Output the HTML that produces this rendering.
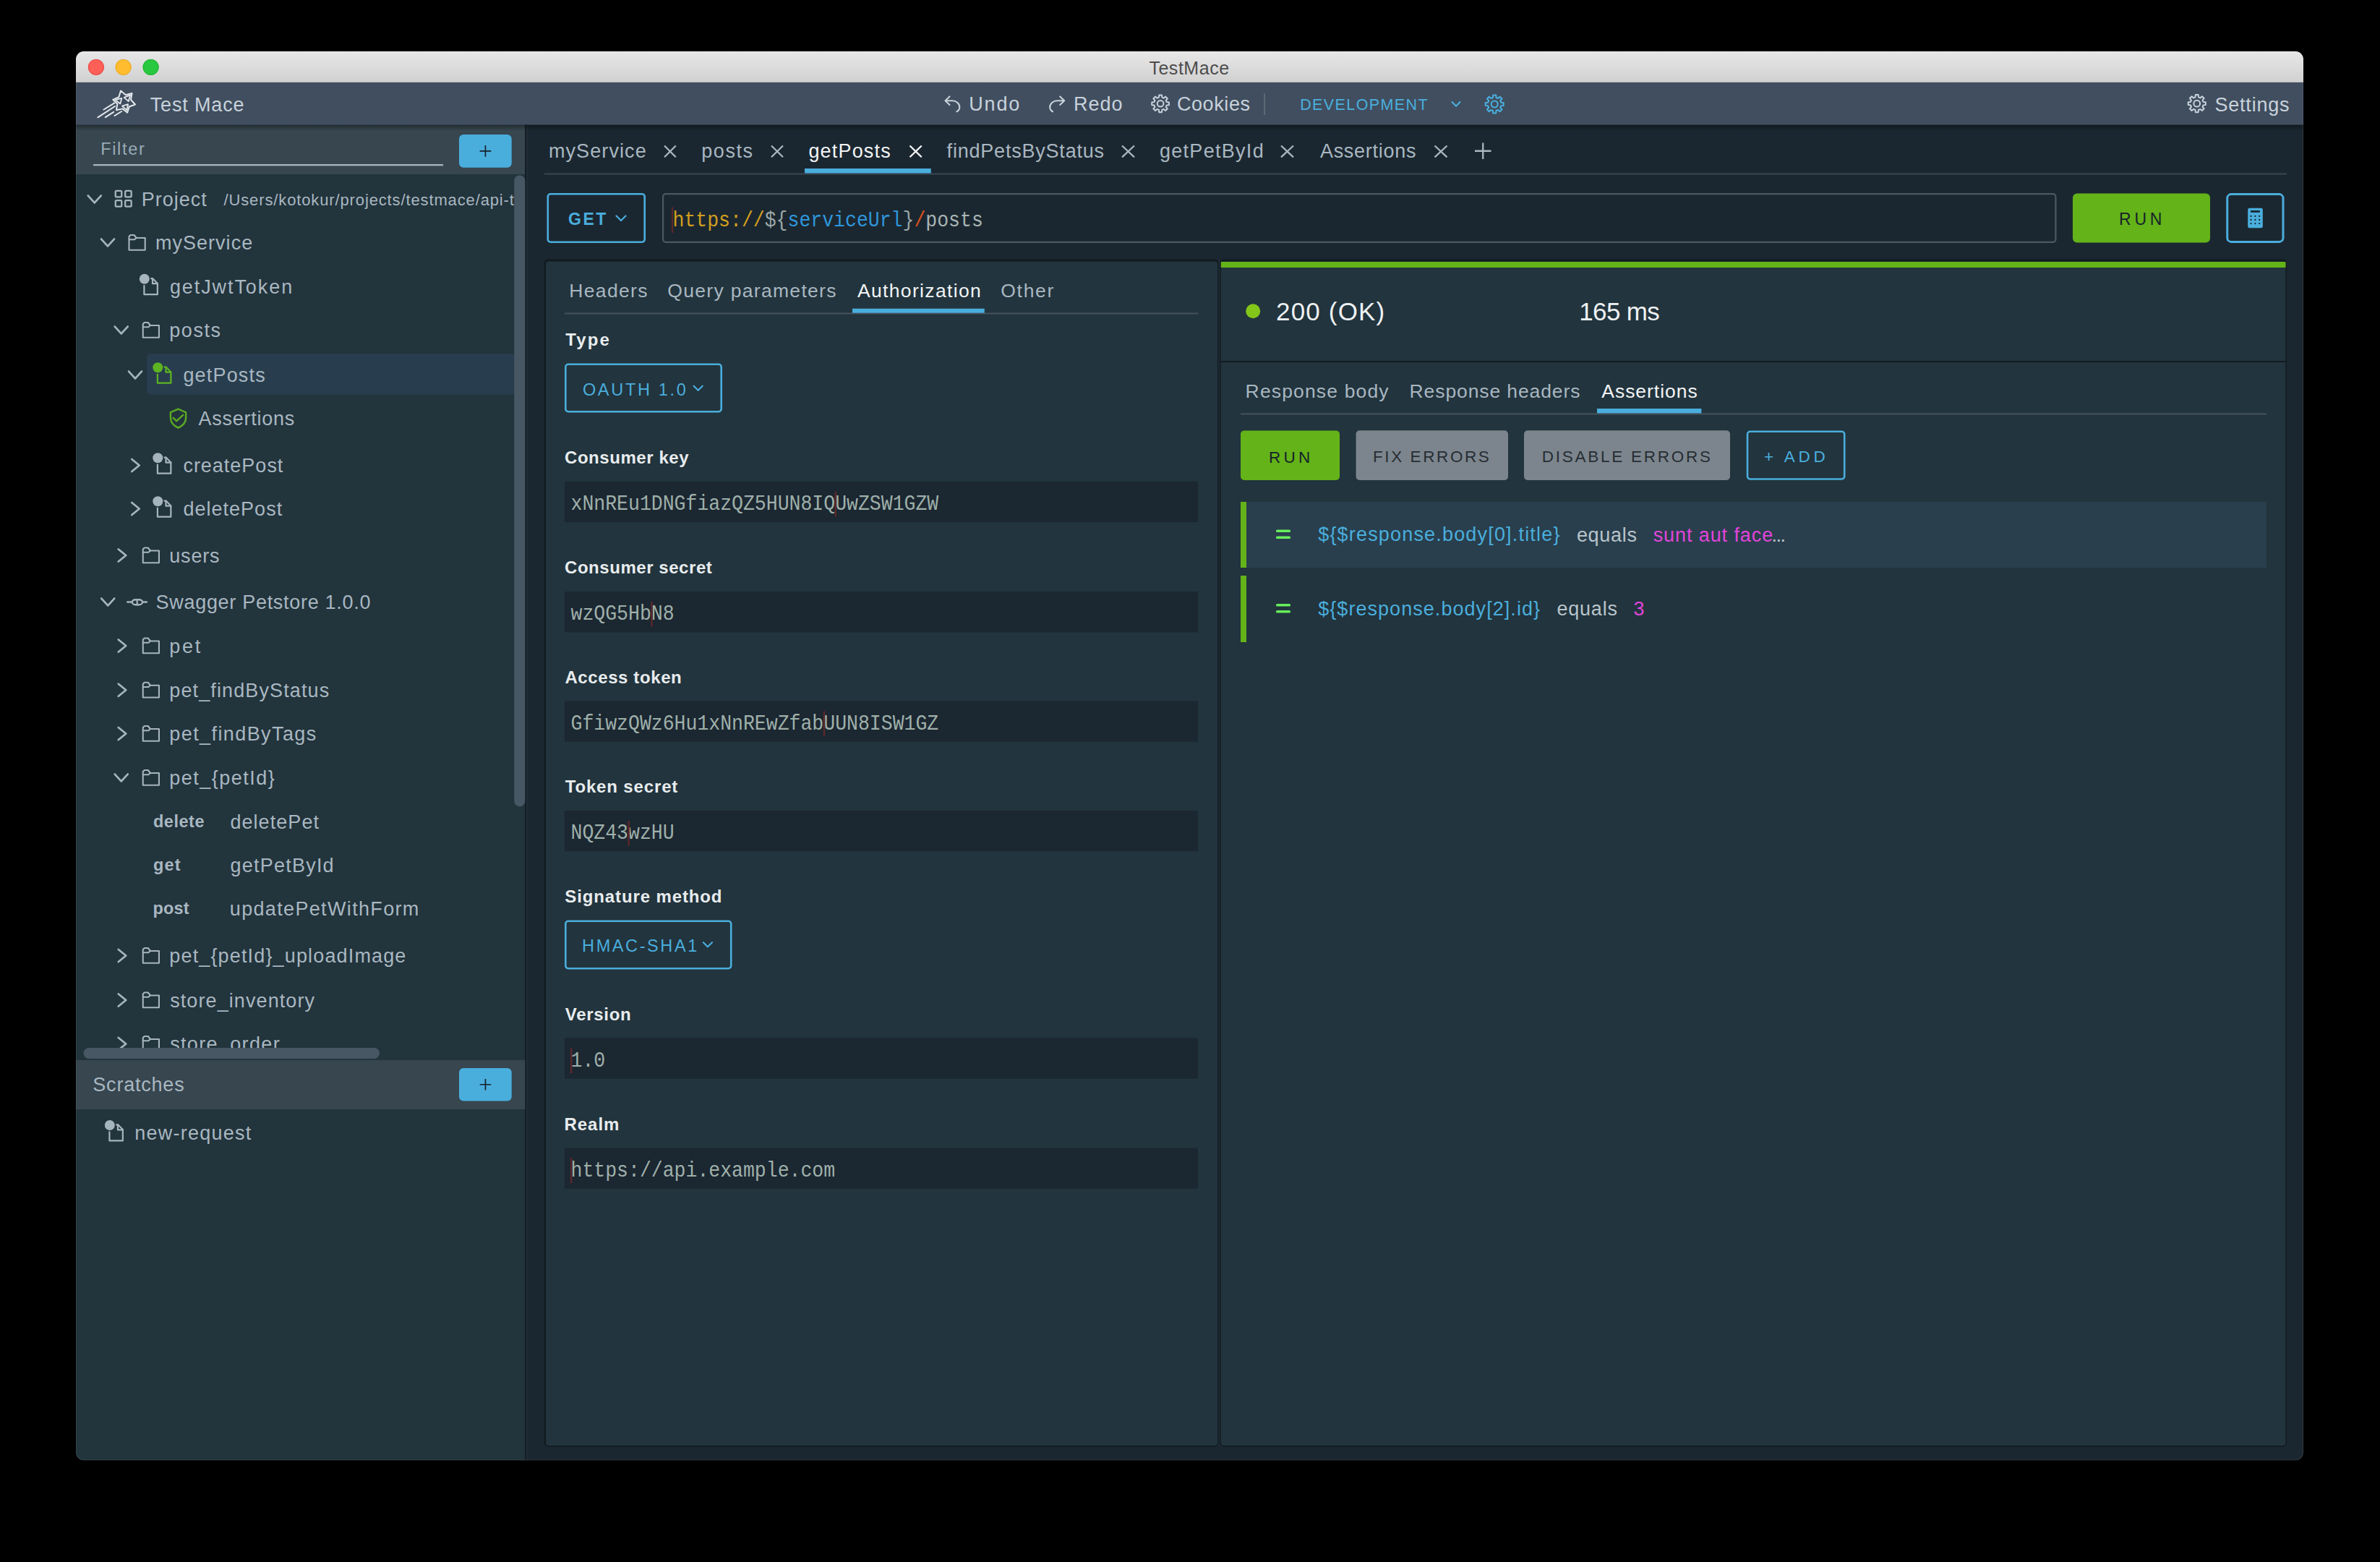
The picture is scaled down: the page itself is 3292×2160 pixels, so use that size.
<!DOCTYPE html>
<html><head><meta charset="utf-8"><title>TestMace</title>
<style>html,body{margin:0;padding:0;background:#000;overflow:hidden}svg{display:block}</style>
</head><body>
<svg width="3292" height="2160" viewBox="0 0 3292 2160">
<defs>
<clipPath id="win"><rect x="105" y="71" width="3081" height="1948.5" rx="11"/></clipPath>
<linearGradient id="tb" x1="0" y1="0" x2="0" y2="1"><stop offset="0" stop-color="#e7e7e7"/><stop offset="1" stop-color="#d1d1d1"/></linearGradient>
<linearGradient id="hsh" x1="0" y1="0" x2="0" y2="1"><stop offset="0" stop-color="#000" stop-opacity="0.35"/><stop offset="1" stop-color="#000" stop-opacity="0"/></linearGradient>
<clipPath id="tree"><rect x="105" y="241" width="606" height="1208"/></clipPath>
<clipPath id="treepath"><rect x="105" y="241" width="606" height="1208"/></clipPath>
</defs>
<rect x="0" y="0" width="3292" height="2160" fill="#000"/>
<g clip-path="url(#win)">
<rect x="105" y="71" width="3081" height="43" fill="url(#tb)"/>
<rect x="105" y="113" width="3081" height="1" fill="#bcbcbc"/>
<circle cx="132.9" cy="92.9" r="11" fill="#fe5f57"/>
<circle cx="170.6" cy="92.9" r="11" fill="#febc2e"/>
<circle cx="208.6" cy="92.9" r="11" fill="#28c840"/>
<circle cx="132.9" cy="92.9" r="10.6" fill="none" stroke="#e0443e" stroke-width="0.8"/>
<circle cx="170.6" cy="92.9" r="10.6" fill="none" stroke="#dea123" stroke-width="0.8"/>
<circle cx="208.6" cy="92.9" r="10.6" fill="none" stroke="#1aab29" stroke-width="0.8"/>
<text x="1589.4" y="103" font-family="'Liberation Sans', sans-serif" font-size="25" fill="#4d4d4d" letter-spacing="0.53">TestMace</text>
<rect x="105" y="114" width="3081" height="59" fill="#404e5f"/>
<rect x="105" y="172.5" width="621.3" height="1847" fill="#22343c"/>
<rect x="105" y="173" width="621.3" height="68" fill="#37464f"/>
<rect x="726.3" y="172.5" width="2459.7" height="1847" fill="#1b2730"/>
<rect x="726.3" y="172.5" width="1.7" height="1847" fill="#151e25"/>
<rect x="728" y="172.5" width="2" height="1847" fill="#1f2d35"/>
<rect x="105" y="173" width="3081" height="8" fill="url(#hsh)"/>
<path d="M167.00,125.60 L173.82,131.26 L182.50,129.00 L181.02,137.96 L187.00,144.50 L178.78,147.54 L176.20,155.80 L169.43,150.36 L161.00,152.20 L162.33,143.83 L156.20,137.80 L164.37,134.26 Z" fill="none" stroke="#e4e8ec" stroke-width="2" stroke-linecap="round" stroke-linejoin="round"/>
<path d="M171.70,134.80 L180.10,131.40 L177.80,140.20 Z" fill="none" stroke="#e4e8ec" stroke-width="1.8" stroke-linecap="round" stroke-linejoin="round"/>
<path d="M159.60,138.20 L168.40,135.80 L166.30,143.50 Z" fill="none" stroke="#e4e8ec" stroke-width="1.8" stroke-linecap="round" stroke-linejoin="round"/>
<path d="M169.00,146.60 L177.10,144.20 L175.40,152.30 Z" fill="none" stroke="#e4e8ec" stroke-width="1.8" stroke-linecap="round" stroke-linejoin="round"/>
<path d="M143.5,151.5 L158,142.6" fill="none" stroke="#e4e8ec" stroke-width="2" stroke-linecap="round" stroke-linejoin="round"/>
<path d="M135.3,162.3 L159,147" fill="none" stroke="#e4e8ec" stroke-width="2" stroke-linecap="round" stroke-linejoin="round"/>
<path d="M145.8,162.2 L157.2,154.8" fill="none" stroke="#e4e8ec" stroke-width="2" stroke-linecap="round" stroke-linejoin="round"/>
<path d="M158.5,160 L168.2,154" fill="none" stroke="#e4e8ec" stroke-width="2" stroke-linecap="round" stroke-linejoin="round"/>
<text x="207.7" y="154" font-family="'Liberation Sans', sans-serif" font-size="27" fill="#c8d2db" letter-spacing="0.86">Test Mace</text>
<path d="M1313.5,133.5 L1307.5,139.3 L1313.5,145 M1307.5,139.3 H1317 C1323,139.3 1327.3,143.5 1327.3,148.3 C1327.3,151 1326,153 1323.5,154.3" fill="none" stroke="#c8d2db" stroke-width="2.1" stroke-linecap="round" stroke-linejoin="round"/>
<text x="1340.2" y="152.5" font-family="'Liberation Sans', sans-serif" font-size="27" fill="#c8d2db" letter-spacing="1.87">Undo</text>
<path d="M1466.2,133.5 L1472.2,139.3 L1466.2,145 M1472.2,139.3 H1462.5 C1456.5,139.3 1452.2,143.5 1452.2,148.3 C1452.2,151 1453.5,153 1456,154.3" fill="none" stroke="#c8d2db" stroke-width="2.1" stroke-linecap="round" stroke-linejoin="round"/>
<text x="1485" y="152.5" font-family="'Liberation Sans', sans-serif" font-size="27" fill="#c8d2db" letter-spacing="1.03">Redo</text>
<path d="M1603.22,131.45 L1606.98,131.45 L1607.31,134.70 L1609.62,135.66 L1612.15,133.59 L1614.81,136.25 L1612.74,138.78 L1613.70,141.09 L1616.95,141.42 L1616.95,145.18 L1613.70,145.51 L1612.74,147.82 L1614.81,150.35 L1612.15,153.01 L1609.62,150.94 L1607.31,151.90 L1606.98,155.15 L1603.22,155.15 L1602.89,151.90 L1600.58,150.94 L1598.05,153.01 L1595.39,150.35 L1597.46,147.82 L1596.50,145.51 L1593.25,145.18 L1593.25,141.42 L1596.50,141.09 L1597.46,138.78 L1595.39,136.25 L1598.05,133.59 L1600.58,135.66 L1602.89,134.70 Z" fill="none" stroke="#c8d2db" stroke-width="2" stroke-linecap="round" stroke-linejoin="round"/>
<circle cx="1605.1" cy="143.3" r="4.32" fill="none" stroke="#c8d2db" stroke-width="2"/>
<text x="1627.9" y="152.5" font-family="'Liberation Sans', sans-serif" font-size="27" fill="#c8d2db" letter-spacing="0.6">Cookies</text>
<rect x="1748" y="129" width="2" height="30" fill="#5b6773"/>
<text x="1798.2" y="152" font-family="'Liberation Sans', sans-serif" font-size="21.5" fill="#4aaedd" letter-spacing="1.39">DEVELOPMENT</text>
<path d="M2008.5,141 L2014,146.8 L2019.5,141" fill="none" stroke="#4aaedd" stroke-width="2.1" stroke-linecap="round" stroke-linejoin="round"/>
<path d="M2065.23,131.56 L2069.17,131.56 L2069.52,134.97 L2071.95,135.97 L2074.61,133.81 L2077.39,136.59 L2075.23,139.25 L2076.23,141.68 L2079.64,142.03 L2079.64,145.97 L2076.23,146.32 L2075.23,148.75 L2077.39,151.41 L2074.61,154.19 L2071.95,152.03 L2069.52,153.03 L2069.17,156.44 L2065.23,156.44 L2064.88,153.03 L2062.45,152.03 L2059.79,154.19 L2057.01,151.41 L2059.17,148.75 L2058.17,146.32 L2054.76,145.97 L2054.76,142.03 L2058.17,141.68 L2059.17,139.25 L2057.01,136.59 L2059.79,133.81 L2062.45,135.97 L2064.88,134.97 Z" fill="none" stroke="#4aaedd" stroke-width="2.1" stroke-linecap="round" stroke-linejoin="round"/>
<circle cx="2067.2" cy="144" r="4.54" fill="none" stroke="#4aaedd" stroke-width="2.1"/>
<path d="M3036.84,131.10 L3040.66,131.10 L3041.00,134.41 L3043.35,135.38 L3045.92,133.28 L3048.62,135.98 L3046.52,138.55 L3047.49,140.90 L3050.80,141.24 L3050.80,145.06 L3047.49,145.40 L3046.52,147.75 L3048.62,150.32 L3045.92,153.02 L3043.35,150.92 L3041.00,151.89 L3040.66,155.20 L3036.84,155.20 L3036.50,151.89 L3034.15,150.92 L3031.58,153.02 L3028.88,150.32 L3030.98,147.75 L3030.01,145.40 L3026.70,145.06 L3026.70,141.24 L3030.01,140.90 L3030.98,138.55 L3028.88,135.98 L3031.58,133.28 L3034.15,135.38 L3036.50,134.41 Z" fill="none" stroke="#c8d2db" stroke-width="2" stroke-linecap="round" stroke-linejoin="round"/>
<circle cx="3038.75" cy="143.15" r="4.39" fill="none" stroke="#c8d2db" stroke-width="2"/>
<text x="3063.4" y="154" font-family="'Liberation Sans', sans-serif" font-size="27" fill="#c8d2db" letter-spacing="0.81">Settings</text>
<text x="139.2" y="214.3" font-family="'Liberation Sans', sans-serif" font-size="23.5" fill="#9aabb6" letter-spacing="1.66">Filter</text>
<rect x="129" y="227" width="484" height="2.3" fill="#a9b6bf"/>
<rect x="635" y="186" width="72.7" height="45.8" rx="6" fill="#4aaedd"/>
<path d="M663.6,208.9 H679.3 M671.45,201 V216.8" fill="none" stroke="#15202a" stroke-width="1.7" stroke-linecap="butt" stroke-linejoin="round"/>
<rect x="203" y="489.25" width="509" height="56.25" rx="5" fill="#283e4e"/>
<g clip-path="url(#tree)">
<path d="M121.8,270.6 L130.75,280.4 L139.7,270.6" fill="none" stroke="#a6b4be" stroke-width="2.8" stroke-linecap="round" stroke-linejoin="round"/>
<rect x="159.75" y="263.85" width="8.5" height="8.5" rx="1.35" fill="none" stroke="#a6b4be" stroke-width="2.3"/>
<rect x="159.75" y="277.15" width="8.5" height="8.5" rx="1.35" fill="none" stroke="#a6b4be" stroke-width="2.3"/>
<rect x="173.15" y="263.85" width="8.5" height="8.5" rx="1.35" fill="none" stroke="#a6b4be" stroke-width="2.3"/>
<rect x="173.15" y="277.15" width="8.5" height="8.5" rx="1.35" fill="none" stroke="#a6b4be" stroke-width="2.3"/>
<text x="195.8" y="285" font-family="'Liberation Sans', sans-serif" font-size="27" fill="#a9b7c1" letter-spacing="0.98">Project</text>
<text x="309.5" y="284" font-family="'Liberation Sans', sans-serif" font-size="22" fill="#a9b7c1" letter-spacing="0.87">/Users/kotokur/projects/testmace/api-tests</text>
<path d="M140.05,330.6 L149,340.4 L157.95,330.6" fill="none" stroke="#a6b4be" stroke-width="2.8" stroke-linecap="round" stroke-linejoin="round"/>
<path d="M178.5,327 V345.8 H200.7 V329 H188.7 L185.5,325 H180.5 Z" fill="none" stroke="#a6b4be" stroke-width="2.1" stroke-linecap="round" stroke-linejoin="round"/>
<path d="M178.5,331.2 H186.1 L188.7,329" fill="none" stroke="#a6b4be" stroke-width="2.1" stroke-linecap="round" stroke-linejoin="round"/>
<text x="214.95" y="345" font-family="'Liberation Sans', sans-serif" font-size="27" fill="#a9b7c1" letter-spacing="1.03">myService</text>
<path d="M199.4,392.5 V407.2 H217.85 V391.9 L211.1,385.1 H206" fill="none" stroke="#a6b4be" stroke-width="2.2" stroke-linecap="round" stroke-linejoin="round"/>
<path d="M211,385.1 V392.2 H217.85" fill="none" stroke="#a6b4be" stroke-width="2.2" stroke-linecap="round" stroke-linejoin="round"/>
<circle cx="199.8" cy="385.75" r="8.6" fill="#22343c"/>
<circle cx="199.8" cy="385.75" r="7" fill="#a6b4be"/>
<text x="234.9" y="405.5" font-family="'Liberation Sans', sans-serif" font-size="27" fill="#a9b7c1" letter-spacing="1.92">getJwtToken</text>
<path d="M158.8,451.6 L167.75,461.4 L176.7,451.6" fill="none" stroke="#a6b4be" stroke-width="2.8" stroke-linecap="round" stroke-linejoin="round"/>
<path d="M197.75,448 V466.8 H219.95 V450 H207.95 L204.75,446 H199.75 Z" fill="none" stroke="#a6b4be" stroke-width="2.1" stroke-linecap="round" stroke-linejoin="round"/>
<path d="M197.75,452.2 H205.35 L207.95,450" fill="none" stroke="#a6b4be" stroke-width="2.1" stroke-linecap="round" stroke-linejoin="round"/>
<text x="234.3" y="466" font-family="'Liberation Sans', sans-serif" font-size="27" fill="#a9b7c1" letter-spacing="1.55">posts</text>
<path d="M178.05,513.6 L187,523.4 L195.95,513.6" fill="none" stroke="#a6b4be" stroke-width="2.8" stroke-linecap="round" stroke-linejoin="round"/>
<path d="M217.9,515 V529.7 H236.35 V514.4 L229.6,507.6 H224.5" fill="none" stroke="#5db322" stroke-width="2.2" stroke-linecap="round" stroke-linejoin="round"/>
<path d="M229.5,507.6 V514.7 H236.35" fill="none" stroke="#5db322" stroke-width="2.2" stroke-linecap="round" stroke-linejoin="round"/>
<circle cx="218.3" cy="508.25" r="8.6" fill="#283e4e"/>
<circle cx="218.3" cy="508.25" r="7" fill="#5db322"/>
<text x="253.4" y="528" font-family="'Liberation Sans', sans-serif" font-size="27" fill="#a9b7c1" letter-spacing="1.18">getPosts</text>
<path d="M246.5,565.7 L235.9,570.2 V577.5 Q235.9,587 246.5,591.5 Q257.1,587 257.1,577.5 V570.2 Z" fill="none" stroke="#5aa823" stroke-width="2.5" stroke-linecap="round" stroke-linejoin="round"/>
<path d="M239.6,577.9 L244.4,582.2 L253.2,573.9" fill="none" stroke="#5aa823" stroke-width="2.5" stroke-linecap="round" stroke-linejoin="round"/>
<text x="274.4" y="587.5" font-family="'Liberation Sans', sans-serif" font-size="27" fill="#a9b7c1" letter-spacing="0.76">Assertions</text>
<path d="M182.3,635 L192.7,643.5 L182.3,652" fill="none" stroke="#a6b4be" stroke-width="2.8" stroke-linecap="round" stroke-linejoin="round"/>
<path d="M217.9,640 V654.7 H236.35 V639.4 L229.6,632.6 H224.5" fill="none" stroke="#a6b4be" stroke-width="2.2" stroke-linecap="round" stroke-linejoin="round"/>
<path d="M229.5,632.6 V639.7 H236.35" fill="none" stroke="#a6b4be" stroke-width="2.2" stroke-linecap="round" stroke-linejoin="round"/>
<circle cx="218.3" cy="633.25" r="8.6" fill="#22343c"/>
<circle cx="218.3" cy="633.25" r="7" fill="#a6b4be"/>
<text x="253.4" y="653" font-family="'Liberation Sans', sans-serif" font-size="27" fill="#a9b7c1" letter-spacing="0.99">createPost</text>
<path d="M182.3,695 L192.7,703.5 L182.3,712" fill="none" stroke="#a6b4be" stroke-width="2.8" stroke-linecap="round" stroke-linejoin="round"/>
<path d="M217.9,700 V714.7 H236.35 V699.4 L229.6,692.6 H224.5" fill="none" stroke="#a6b4be" stroke-width="2.2" stroke-linecap="round" stroke-linejoin="round"/>
<path d="M229.5,692.6 V699.7 H236.35" fill="none" stroke="#a6b4be" stroke-width="2.2" stroke-linecap="round" stroke-linejoin="round"/>
<circle cx="218.3" cy="693.25" r="8.6" fill="#22343c"/>
<circle cx="218.3" cy="693.25" r="7" fill="#a6b4be"/>
<text x="253.4" y="713" font-family="'Liberation Sans', sans-serif" font-size="27" fill="#a9b7c1" letter-spacing="1.02">deletePost</text>
<path d="M163.8,759.5 L174.2,768 L163.8,776.5" fill="none" stroke="#a6b4be" stroke-width="2.8" stroke-linecap="round" stroke-linejoin="round"/>
<path d="M197.75,759.5 V778.3 H219.95 V761.5 H207.95 L204.75,757.5 H199.75 Z" fill="none" stroke="#a6b4be" stroke-width="2.1" stroke-linecap="round" stroke-linejoin="round"/>
<path d="M197.75,763.7 H205.35 L207.95,761.5" fill="none" stroke="#a6b4be" stroke-width="2.1" stroke-linecap="round" stroke-linejoin="round"/>
<text x="234.3" y="777.5" font-family="'Liberation Sans', sans-serif" font-size="27" fill="#a9b7c1" letter-spacing="0.8">users</text>
<path d="M140.3,827.6 L149.25,837.4 L158.2,827.6" fill="none" stroke="#a6b4be" stroke-width="2.8" stroke-linecap="round" stroke-linejoin="round"/>
<path d="M176.25,832.5 H181.6 M198.2,832.5 H202.85" fill="none" stroke="#a6b4be" stroke-width="2.5" stroke-linecap="round" stroke-linejoin="round"/>
<rect x="182.8" y="829.2" width="14.2" height="7" rx="4.5" fill="none" stroke="#a6b4be" stroke-width="2.4"/>
<path d="M189.7,829 V836.4" fill="none" stroke="#a6b4be" stroke-width="2.2" stroke-linecap="round" stroke-linejoin="round"/>
<text x="215.55" y="842" font-family="'Liberation Sans', sans-serif" font-size="27" fill="#a9b7c1" letter-spacing="0.7">Swagger Petstore 1.0.0</text>
<path d="M163.8,884.5 L174.2,893 L163.8,901.5" fill="none" stroke="#a6b4be" stroke-width="2.8" stroke-linecap="round" stroke-linejoin="round"/>
<path d="M197.75,884.5 V903.3 H219.95 V886.5 H207.95 L204.75,882.5 H199.75 Z" fill="none" stroke="#a6b4be" stroke-width="2.1" stroke-linecap="round" stroke-linejoin="round"/>
<path d="M197.75,888.7 H205.35 L207.95,886.5" fill="none" stroke="#a6b4be" stroke-width="2.1" stroke-linecap="round" stroke-linejoin="round"/>
<text x="234.3" y="902.5" font-family="'Liberation Sans', sans-serif" font-size="27" fill="#a9b7c1" letter-spacing="2.7">pet</text>
<path d="M163.8,945.75 L174.2,954.25 L163.8,962.75" fill="none" stroke="#a6b4be" stroke-width="2.8" stroke-linecap="round" stroke-linejoin="round"/>
<path d="M197.75,945.75 V964.55 H219.95 V947.75 H207.95 L204.75,943.75 H199.75 Z" fill="none" stroke="#a6b4be" stroke-width="2.1" stroke-linecap="round" stroke-linejoin="round"/>
<path d="M197.75,949.95 H205.35 L207.95,947.75" fill="none" stroke="#a6b4be" stroke-width="2.1" stroke-linecap="round" stroke-linejoin="round"/>
<text x="234.3" y="963.75" font-family="'Liberation Sans', sans-serif" font-size="27" fill="#a9b7c1" letter-spacing="1.12">pet_findByStatus</text>
<path d="M163.8,1006 L174.2,1014.5 L163.8,1023" fill="none" stroke="#a6b4be" stroke-width="2.8" stroke-linecap="round" stroke-linejoin="round"/>
<path d="M197.75,1006 V1024.8 H219.95 V1008 H207.95 L204.75,1004 H199.75 Z" fill="none" stroke="#a6b4be" stroke-width="2.1" stroke-linecap="round" stroke-linejoin="round"/>
<path d="M197.75,1010.2 H205.35 L207.95,1008" fill="none" stroke="#a6b4be" stroke-width="2.1" stroke-linecap="round" stroke-linejoin="round"/>
<text x="234.3" y="1024" font-family="'Liberation Sans', sans-serif" font-size="27" fill="#a9b7c1" letter-spacing="1.41">pet_findByTags</text>
<path d="M158.8,1070.6 L167.75,1080.4 L176.7,1070.6" fill="none" stroke="#a6b4be" stroke-width="2.8" stroke-linecap="round" stroke-linejoin="round"/>
<path d="M197.75,1067 V1085.8 H219.95 V1069 H207.95 L204.75,1065 H199.75 Z" fill="none" stroke="#a6b4be" stroke-width="2.1" stroke-linecap="round" stroke-linejoin="round"/>
<path d="M197.75,1071.2 H205.35 L207.95,1069" fill="none" stroke="#a6b4be" stroke-width="2.1" stroke-linecap="round" stroke-linejoin="round"/>
<text x="234.3" y="1085" font-family="'Liberation Sans', sans-serif" font-size="27" fill="#a9b7c1" letter-spacing="1.48">pet_{petId}</text>
<path d="M163.8,1313 L174.2,1321.5 L163.8,1330" fill="none" stroke="#a6b4be" stroke-width="2.8" stroke-linecap="round" stroke-linejoin="round"/>
<path d="M197.75,1313 V1331.8 H219.95 V1315 H207.95 L204.75,1311 H199.75 Z" fill="none" stroke="#a6b4be" stroke-width="2.1" stroke-linecap="round" stroke-linejoin="round"/>
<path d="M197.75,1317.2 H205.35 L207.95,1315" fill="none" stroke="#a6b4be" stroke-width="2.1" stroke-linecap="round" stroke-linejoin="round"/>
<text x="234.3" y="1331" font-family="'Liberation Sans', sans-serif" font-size="27" fill="#a9b7c1" letter-spacing="1.15">pet_{petId}_uploadImage</text>
<path d="M163.8,1374.5 L174.2,1383 L163.8,1391.5" fill="none" stroke="#a6b4be" stroke-width="2.8" stroke-linecap="round" stroke-linejoin="round"/>
<path d="M197.75,1374.5 V1393.3 H219.95 V1376.5 H207.95 L204.75,1372.5 H199.75 Z" fill="none" stroke="#a6b4be" stroke-width="2.1" stroke-linecap="round" stroke-linejoin="round"/>
<path d="M197.75,1378.7 H205.35 L207.95,1376.5" fill="none" stroke="#a6b4be" stroke-width="2.1" stroke-linecap="round" stroke-linejoin="round"/>
<text x="235.2" y="1392.5" font-family="'Liberation Sans', sans-serif" font-size="27" fill="#a9b7c1" letter-spacing="1.09">store_inventory</text>
<path d="M163.8,1435 L174.2,1443.5 L163.8,1452" fill="none" stroke="#a6b4be" stroke-width="2.8" stroke-linecap="round" stroke-linejoin="round"/>
<path d="M197.75,1435 V1453.8 H219.95 V1437 H207.95 L204.75,1433 H199.75 Z" fill="none" stroke="#a6b4be" stroke-width="2.1" stroke-linecap="round" stroke-linejoin="round"/>
<path d="M197.75,1439.2 H205.35 L207.95,1437" fill="none" stroke="#a6b4be" stroke-width="2.1" stroke-linecap="round" stroke-linejoin="round"/>
<text x="235.2" y="1453" font-family="'Liberation Sans', sans-serif" font-size="27" fill="#a9b7c1" letter-spacing="1.34">store_order</text>
<text x="212" y="1143.7" font-family="'Liberation Sans', sans-serif" font-size="23.5" fill="#a9b7c1" font-weight="700" letter-spacing="0.52">delete</text>
<text x="318.4" y="1145.5" font-family="'Liberation Sans', sans-serif" font-size="27" fill="#a9b7c1" letter-spacing="1.06">deletePet</text>
<text x="212" y="1204.2" font-family="'Liberation Sans', sans-serif" font-size="23.5" fill="#a9b7c1" font-weight="700" letter-spacing="1.18">get</text>
<text x="318.4" y="1206" font-family="'Liberation Sans', sans-serif" font-size="27" fill="#a9b7c1" letter-spacing="1.24">getPetById</text>
<text x="211.5" y="1264.2" font-family="'Liberation Sans', sans-serif" font-size="23.5" fill="#a9b7c1" font-weight="700" letter-spacing="0.15">post</text>
<text x="317.8" y="1266" font-family="'Liberation Sans', sans-serif" font-size="27" fill="#a9b7c1" letter-spacing="1.34">updatePetWithForm</text>
</g>
<rect x="711.2" y="242.4" width="15.1" height="872.8" rx="7.5" fill="#485764"/>
<rect x="115.5" y="1449" width="409.5" height="15" rx="7.5" fill="#485764"/>
<rect x="105" y="1466" width="621.3" height="68" fill="#37464f"/>
<text x="128.3" y="1508.75" font-family="'Liberation Sans', sans-serif" font-size="27" fill="#a9b7c1" letter-spacing="0.79">Scratches</text>
<rect x="635" y="1477" width="72.7" height="45.5" rx="6" fill="#4aaedd"/>
<path d="M663.6,1499.75 H679.3 M671.45,1491.9 V1507.6" fill="none" stroke="#15202a" stroke-width="1.7" stroke-linecap="butt" stroke-linejoin="round"/>
<path d="M151.4,1562.7 V1577.4 H169.85 V1562.1 L163.1,1555.3 H158" fill="none" stroke="#a6b4be" stroke-width="2.2" stroke-linecap="round" stroke-linejoin="round"/>
<path d="M163,1555.3 V1562.4 H169.85" fill="none" stroke="#a6b4be" stroke-width="2.2" stroke-linecap="round" stroke-linejoin="round"/>
<circle cx="151.8" cy="1555.95" r="8.6" fill="#22343c"/>
<circle cx="151.8" cy="1555.95" r="7" fill="#a6b4be"/>
<text x="186.2" y="1575.7" font-family="'Liberation Sans', sans-serif" font-size="27" fill="#a9b7c1" letter-spacing="1.24">new-request</text>
<text x="758.95" y="218.3" font-family="'Liberation Sans', sans-serif" font-size="27" fill="#a9b7c1" letter-spacing="1.09">myService</text>
<path d="M919,201.5 L934.75,217.3 M934.75,201.5 L919,217.3" fill="none" stroke="#a9b7c1" stroke-width="2.3" stroke-linecap="butt" stroke-linejoin="round"/>
<text x="970.3" y="218.3" font-family="'Liberation Sans', sans-serif" font-size="27" fill="#a9b7c1" letter-spacing="1.55">posts</text>
<path d="M1067,201.5 L1083,217.3 M1083,201.5 L1067,217.3" fill="none" stroke="#a9b7c1" stroke-width="2.3" stroke-linecap="butt" stroke-linejoin="round"/>
<text x="1118.4" y="218.3" font-family="'Liberation Sans', sans-serif" font-size="27" fill="#f2f4f6" letter-spacing="1.18">getPosts</text>
<path d="M1258.5,201.5 L1274.75,217.3 M1274.75,201.5 L1258.5,217.3" fill="none" stroke="#f2f4f6" stroke-width="2.3" stroke-linecap="butt" stroke-linejoin="round"/>
<text x="1309.6" y="218.3" font-family="'Liberation Sans', sans-serif" font-size="27" fill="#a9b7c1" letter-spacing="0.79">findPetsByStatus</text>
<path d="M1552,201.5 L1569,217.3 M1569,201.5 L1552,217.3" fill="none" stroke="#a9b7c1" stroke-width="2.3" stroke-linecap="butt" stroke-linejoin="round"/>
<text x="1603.9" y="218.3" font-family="'Liberation Sans', sans-serif" font-size="27" fill="#a9b7c1" letter-spacing="1.3">getPetById</text>
<path d="M1772,201.5 L1789,217.3 M1789,201.5 L1772,217.3" fill="none" stroke="#a9b7c1" stroke-width="2.3" stroke-linecap="butt" stroke-linejoin="round"/>
<text x="1825.9" y="218.3" font-family="'Liberation Sans', sans-serif" font-size="27" fill="#a9b7c1" letter-spacing="0.73">Assertions</text>
<path d="M1984.5,201.5 L2001.5,217.3 M2001.5,201.5 L1984.5,217.3" fill="none" stroke="#a9b7c1" stroke-width="2.3" stroke-linecap="butt" stroke-linejoin="round"/>
<path d="M2040,208.75 H2062.5 M2051.25,197.5 V220" fill="none" stroke="#a9b7c1" stroke-width="2.3" stroke-linecap="butt" stroke-linejoin="round"/>
<rect x="753" y="239.5" width="2410" height="2" fill="#3a4753"/>
<rect x="1113" y="233" width="174.75" height="6.5" fill="#4aaedd"/>
<rect x="757.8" y="268.3" width="133.9" height="66.4" rx="3.7" fill="none" stroke="#4aaedd" stroke-width="2.6"/>
<text x="786.1" y="310.75" font-family="'Liberation Sans', sans-serif" font-size="23" fill="#4aaedd" font-weight="700" letter-spacing="2.45">GET</text>
<path d="M852.5,298.5 L859,305 L865.5,298.5" fill="none" stroke="#4aaedd" stroke-width="2.2" stroke-linecap="round" stroke-linejoin="round"/>
<rect x="917.1" y="268.1" width="1926.3" height="66.8" rx="3.9" fill="none" stroke="#4b5763" stroke-width="2.2"/>
<text transform="translate(930.5 312.8) scale(0.8833 1)" font-family="'Liberation Mono', monospace" font-size="30" fill="#d29f1f">https://</text>
<text transform="translate(1057.7 312.8) scale(0.8833 1)" font-family="'Liberation Mono', monospace" font-size="30" fill="#9aa6a8">${</text>
<text transform="translate(1089.5 312.8) scale(0.8833 1)" font-family="'Liberation Mono', monospace" font-size="30" fill="#2f96dc">serviceUrl</text>
<text transform="translate(1248.5 312.8) scale(0.8833 1)" font-family="'Liberation Mono', monospace" font-size="30" fill="#9aa6a8">}</text>
<text transform="translate(1264.4 312.8) scale(0.8833 1)" font-family="'Liberation Mono', monospace" font-size="30" fill="#d9501e">/</text>
<text transform="translate(1280.3 312.8) scale(0.8833 1)" font-family="'Liberation Mono', monospace" font-size="30" fill="#a8b4b4">posts</text>
<rect x="928.8" y="286.5" width="2.4" height="35.5" fill="#5a282c"/>
<rect x="2867" y="267.5" width="190" height="68" rx="6" fill="#63b319"/>
<text x="2931.1" y="311" font-family="'Liberation Sans', sans-serif" font-size="23" fill="#17222b" letter-spacing="4.75">RUN</text>
<rect x="3080.75" y="268.6" width="77.25" height="65.8" rx="5.5" fill="none" stroke="#4aaedd" stroke-width="3"/>
<rect x="3109.2" y="287.7" width="20.6" height="27.5" rx="2.2" fill="#4aaedd"/>
<rect x="3113" y="291" width="12.8" height="2.8" fill="#1b2730"/>
<circle cx="3113.5" cy="298.9" r="1.15" fill="#1b2730"/>
<circle cx="3119.4" cy="298.9" r="1.15" fill="#1b2730"/>
<circle cx="3125.2" cy="298.9" r="1.15" fill="#1b2730"/>
<circle cx="3113.5" cy="304" r="1.15" fill="#1b2730"/>
<circle cx="3119.4" cy="304" r="1.15" fill="#1b2730"/>
<circle cx="3125.2" cy="304" r="1.15" fill="#1b2730"/>
<circle cx="3113.5" cy="309.1" r="1.15" fill="#1b2730"/>
<circle cx="3119.4" cy="309.1" r="1.15" fill="#1b2730"/>
<circle cx="3125.2" cy="309.1" r="1.15" fill="#1b2730"/>
<rect x="752.8" y="358.5" width="932.4" height="1642" rx="5" fill="#111a20"/>
<rect x="755" y="361.5" width="929" height="1637.5" rx="4" fill="#22343d"/>
<rect x="1685.2" y="358.5" width="2.4" height="1642" fill="#1d2a32"/>
<rect x="1687.6" y="358.5" width="1475.4" height="1642" rx="5" fill="#111a20"/>
<rect x="1688.8" y="361.5" width="1472.7" height="1637.5" rx="4" fill="#22343d"/>
<text x="787.3" y="411.25" font-family="'Liberation Sans', sans-serif" font-size="26.5" fill="#a9b7c1" letter-spacing="1.33">Headers</text>
<text x="923.3" y="411.25" font-family="'Liberation Sans', sans-serif" font-size="26.5" fill="#a9b7c1" letter-spacing="1.31">Query parameters</text>
<text x="1185.9" y="411.25" font-family="'Liberation Sans', sans-serif" font-size="26.5" fill="#f2f4f6" letter-spacing="1.35">Authorization</text>
<text x="1384.3" y="411.25" font-family="'Liberation Sans', sans-serif" font-size="26.5" fill="#a9b7c1" letter-spacing="1.7">Other</text>
<rect x="781" y="432.5" width="876.5" height="2" fill="#46525e"/>
<rect x="1179" y="426.75" width="182.75" height="5.95" fill="#4aaedd"/>
<text x="782.2" y="478" font-family="'Liberation Sans', sans-serif" font-size="24" fill="#e8ecee" font-weight="700" letter-spacing="2.13">Type</text>
<rect x="782.3" y="503.8" width="215.4" height="65.4" rx="3.7" fill="none" stroke="#4aaedd" stroke-width="2.6"/>
<text x="805.9" y="546.75" font-family="'Liberation Sans', sans-serif" font-size="23.5" fill="#4aaedd" letter-spacing="2.69">OAUTH 1.0</text>
<path d="M959.55,533.75 L965.65,539.75 L971.75,533.75" fill="none" stroke="#4aaedd" stroke-width="2.2" stroke-linecap="round" stroke-linejoin="round"/>
<text x="781" y="641.25" font-family="'Liberation Sans', sans-serif" font-size="24" fill="#e8ecee" font-weight="700" letter-spacing="0.56">Consumer key</text>
<rect x="781" y="665.75" width="876" height="56.2" fill="#1b2731"/>
<text transform="translate(789.5 705.05) scale(0.8833 1)" font-family="'Liberation Mono', monospace" font-size="30" fill="#9fb0aa">xNnREu1DNGfiazQZ5HUN8IQUwZSW1GZW</text>
<rect x="1154.6" y="679.55" width="2.5" height="35" fill="#5a282c"/>
<text x="781" y="793" font-family="'Liberation Sans', sans-serif" font-size="24" fill="#e8ecee" font-weight="700" letter-spacing="0.55">Consumer secret</text>
<rect x="781" y="818" width="876" height="56.2" fill="#1b2731"/>
<text transform="translate(789.5 857.3) scale(0.8833 1)" font-family="'Liberation Mono', monospace" font-size="30" fill="#9fb0aa">wzQG5HbN8</text>
<rect x="900.2" y="831.8" width="2.5" height="35" fill="#5a282c"/>
<text x="781.4" y="945" font-family="'Liberation Sans', sans-serif" font-size="24" fill="#e8ecee" font-weight="700" letter-spacing="0.6">Access token</text>
<rect x="781" y="969.5" width="876" height="56.2" fill="#1b2731"/>
<text transform="translate(789.5 1008.8) scale(0.8833 1)" font-family="'Liberation Mono', monospace" font-size="30" fill="#9fb0aa">GfiwzQWz6Hu1xNnREwZfabUUN8ISW1GZ</text>
<rect x="1138.7" y="983.3" width="2.5" height="35" fill="#5a282c"/>
<text x="781.7" y="1096" font-family="'Liberation Sans', sans-serif" font-size="24" fill="#e8ecee" font-weight="700" letter-spacing="0.85">Token secret</text>
<rect x="781" y="1121" width="876" height="56.2" fill="#1b2731"/>
<text transform="translate(789.5 1160.3) scale(0.8833 1)" font-family="'Liberation Mono', monospace" font-size="30" fill="#9fb0aa">NQZ43wzHU</text>
<rect x="868.4" y="1134.8" width="2.5" height="35" fill="#5a282c"/>
<text x="781.3" y="1248" font-family="'Liberation Sans', sans-serif" font-size="24" fill="#e8ecee" font-weight="700" letter-spacing="0.88">Signature method</text>
<rect x="782.3" y="1273.8" width="228.9" height="65.4" rx="3.7" fill="none" stroke="#4aaedd" stroke-width="2.6"/>
<text x="805.1" y="1316.25" font-family="'Liberation Sans', sans-serif" font-size="23.5" fill="#4aaedd" letter-spacing="2.59">HMAC-SHA1</text>
<path d="M972.8,1303.25 L978.9,1309.25 L985,1303.25" fill="none" stroke="#4aaedd" stroke-width="2.2" stroke-linecap="round" stroke-linejoin="round"/>
<text x="781.8" y="1411.25" font-family="'Liberation Sans', sans-serif" font-size="24" fill="#e8ecee" font-weight="700" letter-spacing="0.69">Version</text>
<rect x="781" y="1435.5" width="876" height="56.2" fill="#1b2731"/>
<text transform="translate(789.5 1474.8) scale(0.8833 1)" font-family="'Liberation Mono', monospace" font-size="30" fill="#9fb0aa">1.0</text>
<rect x="788.9" y="1449.3" width="2.5" height="35" fill="#5a282c"/>
<text x="780.4" y="1563" font-family="'Liberation Sans', sans-serif" font-size="24" fill="#e8ecee" font-weight="700" letter-spacing="1">Realm</text>
<rect x="781" y="1587.5" width="876" height="56.2" fill="#1b2731"/>
<text transform="translate(789.5 1626.8) scale(0.8833 1)" font-family="'Liberation Mono', monospace" font-size="30" fill="#9fb0aa">https://api.example.com</text>
<rect x="788.9" y="1601.3" width="2.5" height="35" fill="#5a282c"/>
<rect x="1688.8" y="362" width="1472.7" height="8" fill="#63b319"/>
<circle cx="1733.2" cy="430.25" r="10" fill="#84c51a"/>
<text x="1765" y="442.6" font-family="'Liberation Sans', sans-serif" font-size="35" fill="#eef1f3" letter-spacing="1.17">200 (OK)</text>
<text x="2184.3" y="442.6" font-family="'Liberation Sans', sans-serif" font-size="35" fill="#eef1f3" letter-spacing="-0.66">165 ms</text>
<rect x="1688.8" y="499" width="1472.7" height="2" fill="#121a20"/>
<text x="1722.6" y="550" font-family="'Liberation Sans', sans-serif" font-size="26.5" fill="#a9b7c1" letter-spacing="1.15">Response body</text>
<text x="1949.6" y="550" font-family="'Liberation Sans', sans-serif" font-size="26.5" fill="#a9b7c1" letter-spacing="0.89">Response headers</text>
<text x="2215.3" y="550" font-family="'Liberation Sans', sans-serif" font-size="26.5" fill="#f2f4f6" letter-spacing="0.96">Assertions</text>
<rect x="1716" y="571.4" width="1419" height="2" fill="#46525e"/>
<rect x="2209" y="565" width="144.4" height="6.4" fill="#4aaedd"/>
<rect x="1716" y="595.4" width="137" height="68.6" rx="5" fill="#63b319"/>
<text x="1754.9" y="639.5" font-family="'Liberation Sans', sans-serif" font-size="22.5" fill="#17222b" letter-spacing="4.25">RUN</text>
<rect x="1875.6" y="595.2" width="210.4" height="68.8" rx="5" fill="#7c858d"/>
<text x="1899" y="639.3" font-family="'Liberation Sans', sans-serif" font-size="22.5" fill="#262d33" letter-spacing="2.59">FIX ERRORS</text>
<rect x="2108" y="595.2" width="285" height="68.8" rx="5" fill="#7c858d"/>
<text x="2132.7" y="639.3" font-family="'Liberation Sans', sans-serif" font-size="22.5" fill="#262d33" letter-spacing="2.75">DISABLE ERRORS</text>
<rect x="2417.05" y="596.8" width="134.15" height="65.65" rx="3.7" fill="none" stroke="#4aaedd" stroke-width="2.6"/>
<text x="2439.9" y="639.3" font-family="'Liberation Sans', sans-serif" font-size="22.5" fill="#4aaedd" letter-spacing="4.81">+ ADD</text>
<rect x="1716" y="694" width="1419" height="91" fill="#293f4d"/>
<rect x="1716" y="694" width="8" height="91" fill="#63b319"/>
<rect x="1716" y="796" width="8" height="92" fill="#63b319"/>
<rect x="1765" y="732.5" width="20" height="3.6" rx="1.5" fill="#66ee5c"/>
<rect x="1765" y="741.5" width="20" height="3.6" rx="1.5" fill="#66ee5c"/>
<rect x="1765" y="835" width="20" height="3.6" rx="1.5" fill="#66ee5c"/>
<rect x="1765" y="844" width="20" height="3.6" rx="1.5" fill="#66ee5c"/>
<text x="1823.2" y="748.3" font-family="'Liberation Sans', sans-serif" font-size="27" fill="#4aaedd" letter-spacing="1.18">${$response.body[0].title}</text>
<text x="2180.9" y="748.5" font-family="'Liberation Sans', sans-serif" font-size="27" fill="#b9c4cb" letter-spacing="0.7">equals</text>
<text x="2286.7" y="748.5" font-family="'Liberation Sans', sans-serif" font-size="27" fill="#e044da" letter-spacing="0.91">sunt aut face</text>
<text x="2450.5" y="748.5" font-family="'Liberation Sans', sans-serif" font-size="27" fill="#b9c4cb" letter-spacing="-1.5">...</text>
<text x="1823.2" y="851" font-family="'Liberation Sans', sans-serif" font-size="27" fill="#4aaedd" letter-spacing="1.05">${$response.body[2].id}</text>
<text x="2153.4" y="851" font-family="'Liberation Sans', sans-serif" font-size="27" fill="#b9c4cb" letter-spacing="0.8">equals</text>
<text x="2259.5" y="851" font-family="'Liberation Sans', sans-serif" font-size="27" fill="#e044da">3</text>
<rect x="105" y="71" width="3081" height="1948.5" rx="11" fill="none" stroke="#ffffff" stroke-opacity="0.09" stroke-width="2"/>
</g>
</svg>
</body></html>
